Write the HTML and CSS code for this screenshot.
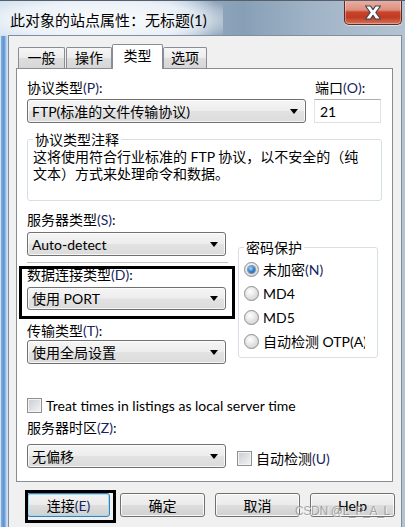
FILE: index.html
```html
<!DOCTYPE html>
<html lang="zh-CN">
<head>
<meta charset="utf-8">
<title>站点属性</title>
<link rel="stylesheet" href="styles.css">
</head>
<body>
<div class="window">
  <div class="titlebar">
    <div class="title">此对象的站点属性：无标题(1)</div>
    <div class="close">
      <svg width="18" height="15" viewBox="0 0 18 15"><path d="M1.5 1 H6.5 L9 4.6 L11.5 1 H16.5 L11.8 7.5 L16.5 14 H11.5 L9 10.4 L6.5 14 H1.5 L6.2 7.5 Z" fill="#ffffff" stroke="#3f4552" stroke-width="1.2" stroke-linejoin="round"/></svg>
    </div>
  </div>
  <div class="client">
    <div class="tabs">
      <div class="tab t1">一般</div>
      <div class="tab t2">操作</div>
      <div class="tab t3 active">类型</div>
      <div class="tab t4">选项</div>
    </div>
    <div class="panel">
      <div class="proto-grid">
        <div class="label">协议类型<span class="mn">(P)</span>:</div>
        <div class="label port-label">端口<span class="mn">(O)</span>:</div>
        <div class="combo"><span class="combo-text">FTP(标准的文件传输协议)</span><span class="arrow"></span></div>
        <div class="textbox">21</div>
      </div>
      <div class="groupbox desc-group">
        <div class="legend">协议类型注释</div>
        <div class="desc">这将使用符合行业标准的 FTP 协议，以不安全的（纯<br>文本）方式来处理命令和数据。</div>
      </div>
      <div class="mid">
        <div class="left-col">
          <div class="label">服务器类型<span class="mn">(S)</span>:</div>
          <div class="combo c-server"><span class="combo-text">Auto-detect</span><span class="arrow"></span></div>
          <div class="separator"></div>
          <div class="label lbl-data">数据连接类型<span class="mn">(D)</span>:</div>
          <div class="combo c-data"><span class="combo-text">使用 PORT</span><span class="arrow"></span></div>
          <div class="label lbl-transfer">传输类型<span class="mn">(T)</span>:</div>
          <div class="combo c-transfer"><span class="combo-text">使用全局设置</span><span class="arrow"></span></div>
        </div>
        <div class="groupbox pw-group">
          <div class="legend">密码保护</div>
          <div class="radio-row first"><span class="radio checked"></span><span class="radio-text">未加密<span class="mn">(N)</span></span></div>
          <div class="radio-row"><span class="radio"></span><span class="radio-text">MD4</span></div>
          <div class="radio-row"><span class="radio"></span><span class="radio-text">MD5</span></div>
          <div class="radio-row"><span class="radio"></span><span class="radio-text clip">自动检测 OTP(A)</span></div>
        </div>
      </div>
      <div class="check-row local-time"><span class="checkbox"></span><span>Treat times in listings as local server time</span></div>
      <div class="label lbl-tz">服务器时区<span class="mn">(Z)</span>:</div>
      <div class="tz-row">
        <div class="combo c-tz"><span class="combo-text">无偏移</span><span class="arrow"></span></div>
        <div class="check-row auto-detect"><span class="checkbox"></span><span>自动检测<span class="mn">(U)</span></span></div>
      </div>
    </div>
    <div class="buttons">
      <div class="btn default b1">连接<span class="mn">(E)</span></div>
      <div class="btn b2">确定</div>
      <div class="btn b3">取消</div>
      <div class="btn b4">Help</div>
    </div>
  </div>
  <div class="highlight hl-data"></div>
  <div class="highlight hl-btn"></div>
  <div class="watermark">CSDN @L_P_A_L</div>
</div>
</body>
</html>
```

FILE: styles.css
```css
* { box-sizing: border-box; }
html, body { margin: 0; padding: 0; }
body {
  font-family: Lato, "Noto Sans CJK SC", sans-serif;
  font-size: 14px;
  line-height: 17px;
  color: #000;
  background: #fff;
}
.window {
  width: 405px;
  height: 527px;
  position: relative;
  overflow: hidden;
  display: flex;
  flex-direction: column;
  border-top: 1px solid #55606c;
  background:
    linear-gradient(90deg, rgba(0,0,0,0) 1px, #7fb0e4 1px, #5a90d2 4px, #a8c9ee 6px, rgba(0,0,0,0) 7px) 0 35px / 8px 100% no-repeat,
    linear-gradient(90deg, #d3e1ef 0%, #cadaeb 42%, #b4c7db 47%, #8ea5bc 53%, #879fb6 60%, #a2b5c8 78%, #b3c3d2 100%);
}
.titlebar {
  height: 34px;
  display: flex;
  justify-content: space-between;
  align-items: flex-start;
  flex: none;
}
.title {
  font-size: 15px;
  line-height: 20px;
  padding: 9px 16px 5px 10px;
  background: radial-gradient(ellipse 65% 80% at 48% 55%, rgba(255,255,255,0.9), rgba(255,255,255,0.6) 65%, rgba(255,255,255,0) 100%);
  white-space: nowrap;
}
.close {
  width: 58px;
  height: 25px;
  margin-top: -1px;
  margin-right: 3px;
  border: 1px solid #5e2a22;
  border-top: none;
  border-radius: 0 0 5px 5px;
  background: linear-gradient(#eab1a5 0%, #dd8f7d 42%, #c8452c 50%, #c13a21 72%, #d3735a 100%);
  box-shadow: inset 0 0 0 1px rgba(255,255,255,0.35), 0 1px 0 rgba(255,255,255,0.55);
  display: flex;
  align-items: center;
  justify-content: center;
  padding-top: 1px;
}
.close svg { display: block; }
.client {
  flex: 1;
  margin: 0 3px 0 8px;
  background: #f0f0f0;
  border: 1px solid #7f8fa0;
  border-bottom: none;
  display: flex;
  flex-direction: column;
}
.tabs {
  display: flex;
  align-items: flex-end;
  height: 24px;
  margin: 8px 0 0 9px;
}
.tab {
  height: 21px;
  border: 1px solid #898c95;
  border-bottom: none;
  background: linear-gradient(#f6f6f6, #ececec 50%, #dedede 52%, #d6d6d6);
  display: flex;
  justify-content: center;
  align-items: center;
  padding-bottom: 1px;
  border-radius: 2px 2px 0 0;
}
.t1 { width: 47px; margin-right: 1px; }
.t2 { width: 46px; }
.t3 { width: 51px; }
.t4 { width: 44px; }
.tab.active {
  height: 25px;
  margin-bottom: -1px;
  background: #fff;
  position: relative;
  z-index: 1;
  padding-bottom: 4px;
}
.panel {
  height: 414px;
  margin: 0 8px 0 7px;
  border: 1px solid #898c95;
  background: #fff;
  padding: 10px 10px 0 10px;
}
.mn { color: #17245e; }
.label { white-space: nowrap; }
.proto-grid {
  display: grid;
  grid-template-columns: 279px 67px;
  column-gap: 8px;
  row-gap: 3px;
}
.port-label { padding-left: 1px; }
.combo {
  height: 24px;
  border: 1px solid #707070;
  border-radius: 3px;
  background: linear-gradient(#f5f5f5, #ededed 48%, #e2e2e2 52%, #dbdbdb);
  box-shadow: inset 0 0 0 1px rgba(255,255,255,0.75);
  display: flex;
  align-items: center;
  padding-left: 4px;
  padding-right: 7px;
  white-space: nowrap;
}
.combo-text { flex: 1; }
.arrow {
  width: 0;
  height: 0;
  border-left: 4px solid transparent;
  border-right: 4px solid transparent;
  border-top: 5px solid #000;
}
.textbox {
  height: 24px;
  border: 1px solid #dbdfe6;
  border-top-color: #abadb3;
  border-left-color: #e2e3ea;
  border-right-color: #e2e3ea;
  background: #fff;
  padding-left: 5px;
  display: flex;
  align-items: center;
}
.groupbox {
  border: 1px solid #d5dfe5;
  border-radius: 3px;
}
.desc-group {
  margin-top: 16px;
  height: 62px;
}
.legend {
  width: max-content;
  margin: -9px 0 0 5px;
  padding: 0 2px;
  background: #fff;
  white-space: nowrap;
}
.desc {
  padding-left: 5px;
  white-space: nowrap;
}
.mid {
  display: flex;
  align-items: flex-start;
  margin-top: 10px;
}
.left-col { width: 201px; flex: none; }
.c-server, .c-data, .c-transfer, .c-tz { width: 199px; }
.c-server { margin-top: 4px; }
.separator {
  margin-top: 6px;
  height: 1px;
  background: #c4c4c4;
}
.lbl-data { margin-top: 3px; }
.c-data { margin-top: 4px; height: 23px; }
.lbl-transfer { margin-top: 12px; }
.c-transfer { margin-top: 1px; }
.pw-group {
  width: 140px;
  height: 111px;
  margin-left: 10px;
  margin-top: 36px;
  flex: none;
}
.radio-row {
  height: 24px;
  display: flex;
  align-items: center;
  gap: 4px;
  padding-left: 5px;
  white-space: nowrap;
}
.radio-row.first { margin-top: 1px; }
.radio {
  width: 15px;
  height: 15px;
  flex: none;
  border-radius: 50%;
  border: 1px solid #8a8c8e;
  background: radial-gradient(circle at 40% 35%, #ffffff 0%, #e6e6e6 45%, #c9c9c9 100%);
  display: flex;
  align-items: center;
  justify-content: center;
}
.radio.checked::after {
  content: "";
  width: 7px;
  height: 7px;
  border-radius: 50%;
  background: radial-gradient(circle at 40% 35%, #a9dcff 0%, #3a8ad6 45%, #0c3f80 100%);
  box-shadow: 0 0 0 1px rgba(20,60,110,0.5);
}
.radio-text.clip {
  width: 102px;
  overflow: hidden;
}
.check-row {
  display: flex;
  align-items: center;
  gap: 4px;
  white-space: nowrap;
}
.local-time { margin-top: 33px; }
.checkbox {
  width: 15px;
  height: 15px;
  flex: none;
  border: 1px solid #8e8f8f;
  background: linear-gradient(135deg, #c9ccd1, #f4f4f5);
  box-shadow: inset 0 0 0 1px #f4f4f4;
}
.lbl-tz { margin-top: 5px; }
.tz-row {
  display: flex;
  align-items: center;
  margin-top: 8px;
}
.auto-detect {
  margin-left: 11px;
  padding-top: 5px;
}
.buttons {
  display: flex;
  gap: 10px;
  margin-top: 11px;
  padding-left: 18px;
}
.btn {
  height: 24px;
  width: 85px;
  border: 1px solid #707070;
  border-radius: 3px;
  background: linear-gradient(#f3f3f3, #ebebeb 48%, #dddddd 52%, #d0d0d0);
  box-shadow: inset 0 0 0 1px rgba(255,255,255,0.8);
  display: flex;
  align-items: center;
  justify-content: center;
  white-space: nowrap;
}
.btn.b1 { width: 83px; }
.btn.default {
  border-color: #3c7fb1;
  box-shadow: inset 0 0 0 1px #9fdcf8;
}
.highlight {
  position: absolute;
  border: 3px solid #000;
}
.hl-data { left: 19px; top: 265px; width: 216px; height: 53px; }
.hl-btn { left: 25px; top: 489px; width: 91px; height: 33px; }
.watermark {
  position: absolute;
  left: 295px;
  top: 503px;
  font-family: "Liberation Sans", sans-serif;
  font-size: 12px;
  line-height: 14px;
  letter-spacing: -0.3px;
  color: rgba(140,140,140,0.75);
  text-shadow: 1px 1px 0 rgba(255,255,255,0.7);
  white-space: nowrap;
}
```
